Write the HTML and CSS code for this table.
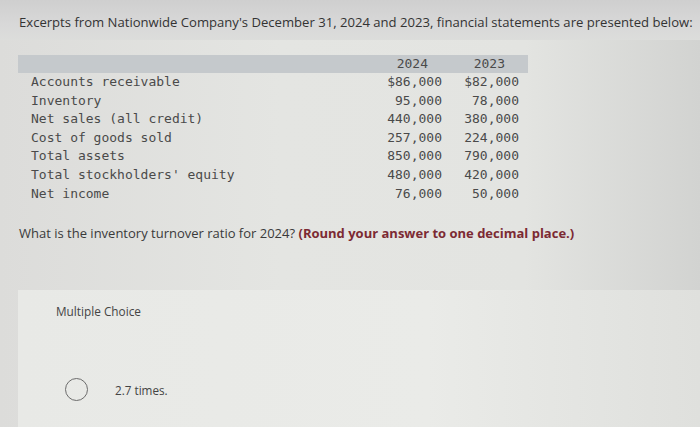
FILE: index.html
```html
<!DOCTYPE html>
<html>
<head>
<meta charset="utf-8">
<link rel="stylesheet" href="styles.css">
</head>
<body>
<div class="page">
  <header class="intro">Excerpts from Nationwide Company's December 31, 2024 and 2023, financial statements are presented below:</header>
  <div class="table">
    <div class="row head"><span class="label"></span><span class="v1">2024</span><span class="v2">2023</span></div>
    <div class="row"><span class="label">Accounts receivable</span><span class="v1">$86,000</span><span class="v2">$82,000</span></div>
    <div class="row"><span class="label">Inventory</span><span class="v1">95,000</span><span class="v2">78,000</span></div>
    <div class="row"><span class="label">Net sales (all credit)</span><span class="v1">440,000</span><span class="v2">380,000</span></div>
    <div class="row"><span class="label">Cost of goods sold</span><span class="v1">257,000</span><span class="v2">224,000</span></div>
    <div class="row"><span class="label">Total assets</span><span class="v1">850,000</span><span class="v2">790,000</span></div>
    <div class="row"><span class="label">Total stockholders' equity</span><span class="v1">480,000</span><span class="v2">420,000</span></div>
    <div class="row"><span class="label">Net income</span><span class="v1">76,000</span><span class="v2">50,000</span></div>
  </div>
  <p class="question">What is the inventory turnover ratio for 2024? <strong>(Round your answer to one decimal place.)</strong></p>
  <section class="choices">
    <div class="mc-title">Multiple Choice</div>
    <div class="option"><span class="radio"></span><span class="opt-text">2.7 times.</span></div>
  </section>
</div>
</body>
</html>
```
FILE: styles.css
```css
html, body {
  margin: 0;
  padding: 0;
}
body {
  width: 700px;
  height: 427px;
  overflow: hidden;
  background: linear-gradient(90deg, #dcdcda 0%, #e4e5e2 40%, #e3e4e1 75%, #d2d3d1 100%);
  font-family: "Open Sans", "Liberation Sans", Arial, sans-serif;
  color: #3a3a3a;
}
.page {
  display: flex;
  flex-direction: column;
  height: 427px;
}
.intro {
  background: linear-gradient(180deg, #cfcfcf 0%, #d8d8d8 60%, #dcdddb 100%);
  font-size: 13.1px;
  padding: 13px 0 0 19px;
  height: 40px;
  box-sizing: border-box;
  color: #333;
  white-space: nowrap;
}
.table {
  margin: 15px 0 0 18px;
  width: 510px;
  font-family: "DejaVu Sans Mono", "Liberation Mono", monospace;
  font-size: 13px;
  color: #4a4a4a;
}
.row {
  display: flex;
  height: 18.6px;
  line-height: 18.6px;
}
.row.head {
  background: #c5c9cc;
  height: 18px;
  line-height: 17px;
}
.label {
  padding-left: 13px;
  width: 357px;
  box-sizing: border-box;
}
.v1 {
  width: 67px;
  text-align: right;
}
.v2 {
  width: 77px;
  text-align: right;
}
.head .v1,
.head .v2 {
  padding-right: 14px;
  box-sizing: border-box;
}
.question {
  margin: 21px 0 0 19px;
  font-size: 13px;
  color: #3a3a3a;
  white-space: nowrap;
}
.question strong {
  color: #7c2a33;
  font-weight: 700;
}
.choices {
  margin: 48px 0 0 18px;
  flex: 1;
  background: linear-gradient(90deg, #e8e9e6 0%, #eaebe8 60%, #dfe0dd 100%);
  padding: 13px 0 0 38px;
}
.mc-title {
  font-size: 11.8px;
  color: #444;
}
.option {
  display: flex;
  align-items: center;
  margin: 59px 0 0 9px;
}
.radio {
  width: 21px;
  height: 21px;
  border: 1.5px solid #6c6c6c;
  border-radius: 50%;
}
.opt-text {
  margin-left: 27px;
  font-size: 11.7px;
  color: #444;
}
```
